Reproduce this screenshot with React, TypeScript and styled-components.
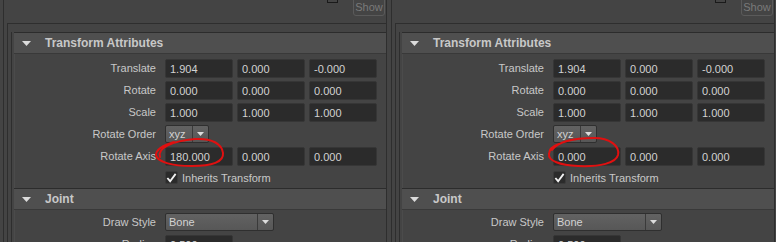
import React from "react"
import styled, { createGlobalStyle } from "styled-components"

const GlobalStyle = createGlobalStyle`
  * {
    box-sizing: border-box;
  }
  body {
    margin: 0;
    background: #444444;
    font-family: "Liberation Sans", Arial, sans-serif;
  }
`

type Attr = {
  label: string
  values: string[]
}

const transformRows: Attr[] = [
  { label: "Translate", values: ["1.904", "0.000", "-0.000"] },
  { label: "Rotate", values: ["0.000", "0.000", "0.000"] },
  { label: "Scale", values: ["1.000", "1.000", "1.000"] },
]

const circles = {
  left:
    "M 160 157 C 157 148, 172 141, 195 139 C 212 138, 222 144, 223 153 C 224 162, 212 166, 192 166 C 172 166, 157 162, 156 155 C 156 149, 164 145, 174 142",
  right:
    "M 164 150 C 170 142, 186 138, 206 138 C 222 138, 232 146, 230 155 C 228 163, 212 167, 190 166 C 172 165, 160 161, 161 154 C 161 149, 165 146, 171 144",
}

const Caret = ({ size = 9 }: { size?: number }) => (
  <svg width={size} height={Math.ceil(size / 2)} viewBox="0 0 9 5">
    <path d="M0 0 L9 0 L4.5 5 Z" fill="#dcdcdc" />
  </svg>
)

const Check = () => (
  <svg width="12" height="12" viewBox="0 0 12 12">
    <path d="M1.5 6 L4.5 9.5 L10.5 1.5" stroke="#f2f2f2" strokeWidth="2" fill="none" />
  </svg>
)

const AttributePanel = ({ axis, circle }: { axis: string; circle: keyof typeof circles }) => (
  <Panel>
    <Column>
      <TopBar>
        <TinyBox />
        <ShowButton>Show</ShowButton>
      </TopBar>
      <Scroller>
        <Frame>
          <Section>
            <SectionHeader>
              <Caret />
              <SectionTitle>Transform Attributes</SectionTitle>
            </SectionHeader>
            <SectionBody>
              {transformRows.map((row) => (
                <Row key={row.label}>
                  <Label>{row.label}</Label>
                  {row.values.map((v, i) => (
                    <Field key={i}>{v}</Field>
                  ))}
                </Row>
              ))}
              <Row>
                <Label>Rotate Order</Label>
                <Dropdown width={44}>
                  <DropdownText>xyz</DropdownText>
                  <DropdownArrow>
                    <Caret size={7} />
                  </DropdownArrow>
                </Dropdown>
              </Row>
              <Row>
                <Label>Rotate Axis</Label>
                <Field>{axis}</Field>
                <Field>0.000</Field>
                <Field>0.000</Field>
              </Row>
              <CheckRow>
                <CheckBox>
                  <Check />
                </CheckBox>
                <CheckLabel>Inherits Transform</CheckLabel>
              </CheckRow>
            </SectionBody>
          </Section>
          <Section>
            <SectionHeader>
              <Caret />
              <SectionTitle>Joint</SectionTitle>
            </SectionHeader>
            <SectionBody $top={3}>
              <Row>
                <Label>Draw Style</Label>
                <Dropdown width={109}>
                  <DropdownText>Bone</DropdownText>
                  <DropdownArrow>
                    <Caret size={7} />
                  </DropdownArrow>
                </Dropdown>
              </Row>
              <Row>
                <Label>Radius</Label>
                <Field>0.500</Field>
              </Row>
            </SectionBody>
          </Section>
        </Frame>
      </Scroller>
    </Column>
    <Annotation width="388" height="242" viewBox="0 0 388 242">
      <path d={circles[circle]} stroke="#e01010" strokeWidth="2" fill="none" strokeLinecap="round" />
    </Annotation>
  </Panel>
)

export default function App() {
  return (
    <>
      <GlobalStyle />
      <Screen>
        <AttributePanel axis="180.000" circle="left" />
        <AttributePanel axis="0.000" circle="right" />
      </Screen>
    </>
  )
}

const Screen = styled.div`
  display: flex;
  width: 776px;
  height: 242px;
  overflow: hidden;
  background: #444444;
`
const Panel = styled.div`
  position: relative;
  flex: none;
  width: 388px;
  height: 242px;
  padding-left: 3px;
  display: flex;
`
const Column = styled.div`
  flex: 1;
  display: flex;
  flex-direction: column;
  border-left: 1px solid #2e2e2e;
  border-right: 1px solid #2e2e2e;
  margin-right: 1px;
`
const TopBar = styled.div`
  height: 23px;
  flex: none;
  display: flex;
  justify-content: flex-end;
  align-items: flex-end;
  gap: 15px;
  padding: 0 1px 7px 0;
`
const TinyBox = styled.div`
  align-self: flex-start;
  width: 11px;
  height: 11px;
  margin-top: -8px;
  border: 1px solid #1a1a1a;
`
const ShowButton = styled.div`
  width: 32px;
  height: 22px;
  display: flex;
  align-items: center;
  justify-content: center;
  padding-top: 4px;
  border: 1px solid #5a5a5a;
  border-radius: 3px;
  color: #7a7a7a;
  font-size: 11px;
`
const Scroller = styled.div`
  flex: 1;
  margin-left: 3px;
  padding: 8px 0 0 3px;
  border-top: 1px solid #2e2e2e;
  border-left: 1px solid #2e2e2e;
`
const Frame = styled.div`
  height: 100%;
  padding-left: 2px;
  border-left: 1px solid #2e2e2e;
`
const Section = styled.div`
  border-top: 1px solid #2c2c2c;
`
const SectionHeader = styled.div`
  height: 21px;
  display: flex;
  align-items: center;
  gap: 14px;
  padding-left: 8px;
  background: #4f4f4f;
  border-bottom: 1px solid #393939;
`
const SectionTitle = styled.span`
  font-size: 12px;
  font-weight: 700;
  color: #c8c8c8;
`
const SectionBody = styled.div<{ $top?: number }>`
  display: flex;
  flex-direction: column;
  gap: 3px;
  padding: ${(p) => p.$top ?? 5}px 0 2px 0;
  border-left: 1px solid #4b4b4b;
`
const Row = styled.div`
  height: 19px;
  display: flex;
  align-items: flex-start;
  gap: 4px;
`
const Label = styled.div`
  width: 141px;
  margin-right: 5px;
  line-height: 19px;
  text-align: right;
  font-size: 11px;
  color: #c8c8c8;
`
const Field = styled.div`
  width: 68px;
  height: 19px;
  padding-left: 4px;
  line-height: 18px;
  font-size: 11px;
  color: #d2d2d2;
  background: #2b2b2b;
  border: 1px solid #363636;
  border-radius: 2px;
`
const Dropdown = styled.div<{ width: number }>`
  width: ${(p) => p.width}px;
  height: 18px;
  display: flex;
  border: 1px solid #2f2f2f;
  border-radius: 2px;
  background: linear-gradient(#626262, #575757);
`
const DropdownText = styled.span`
  flex: 1;
  padding-left: 3px;
  line-height: 16px;
  font-size: 11px;
  color: #d2d2d2;
`
const DropdownArrow = styled.span`
  width: 16px;
  display: flex;
  align-items: center;
  justify-content: center;
  border-left: 1px solid #3a3a3a;
`
const CheckRow = styled.div`
  height: 17px;
  display: flex;
  align-items: center;
  gap: 4px;
  padding-left: 150px;
`
const CheckBox = styled.div`
  width: 13px;
  height: 13px;
  display: flex;
  align-items: center;
  justify-content: center;
  background: #2b2b2b;
  border: 1px solid #3a3a3a;
  border-radius: 2px;
`
const CheckLabel = styled.span`
  font-size: 11px;
  color: #c8c8c8;
`
const Annotation = styled.svg`
  position: absolute;
  left: 0;
  top: 0;
  pointer-events: none;
`
